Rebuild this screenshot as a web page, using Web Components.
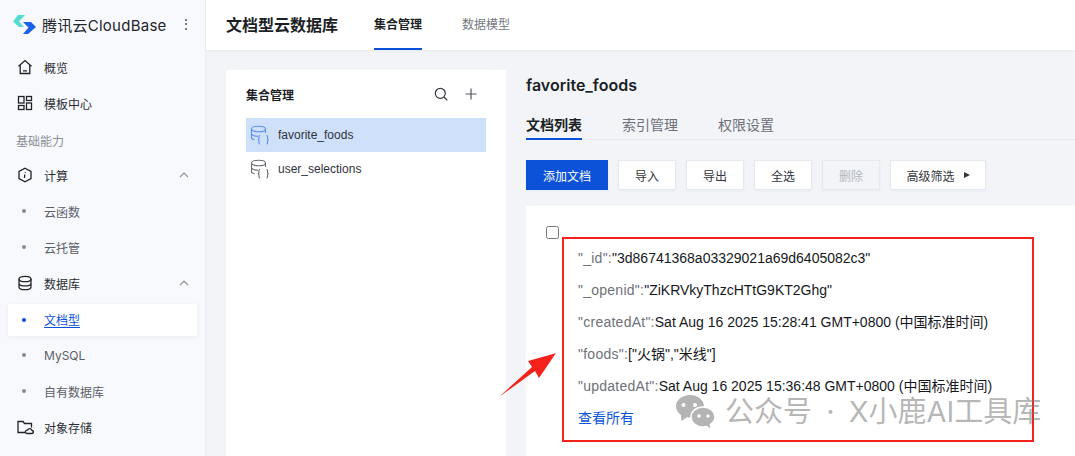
<!DOCTYPE html>
<html lang="zh-CN">
<head>
<meta charset="utf-8">
<title>CloudBase</title>
<style>
  html, body { margin: 0; height: 456px; overflow: hidden; }
  body { font-family: Inter, "Noto Sans CJK SC", sans-serif; color: #1c1f26; }
</style>
</head>
<body>
<cloud-app>
  <side-bar slot="side">
    <nav-row icon="home">概览</nav-row>
    <nav-row icon="grid">模板中心</nav-row>
    <nav-label>基础能力</nav-label>
    <nav-row icon="hex" open>计算</nav-row>
    <nav-row sub>云函数</nav-row>
    <nav-row sub>云托管</nav-row>
    <nav-row icon="db" open>数据库</nav-row>
    <nav-row sub active>文档型</nav-row>
    <nav-row sub>MySQL</nav-row>
    <nav-row sub>自有数据库</nav-row>
    <nav-row icon="folder">对象存储</nav-row>
  </side-bar>
  <top-bar slot="top"></top-bar>
  <collection-panel slot="left">
    <collection-row selected>favorite_foods</collection-row>
    <collection-row>user_selections</collection-row>
  </collection-panel>
  <doc-view slot="right">
    <doc-field name="_id">"3d86741368a03329021a69d6405082c3"</doc-field>
    <doc-field name="_openid">"ZiKRVkyThzcHTtG9KT2Ghg"</doc-field>
    <doc-field name="createdAt">Sat Aug 16 2025 15:28:41 GMT+0800 (中国标准时间)</doc-field>
    <doc-field name="foods">["火锅","米线"]</doc-field>
    <doc-field name="updatedAt">Sat Aug 16 2025 15:36:48 GMT+0800 (中国标准时间)</doc-field>
  </doc-view>
  <note-layer slot="over"></note-layer>
</cloud-app>

<script>
const ICONS = {
  home: '<path d="M2.5 8.2 9 2.5l6.5 5.7M4.2 7v8.5h9.6V7M7 12.8h4"/>',
  grid: '<rect x="2.5" y="2.5" width="5.5" height="6.5"/><rect x="10.5" y="2.5" width="5" height="4"/><rect x="2.5" y="11.5" width="5.5" height="4"/><rect x="10.5" y="9" width="5" height="6.5"/>',
  hex: '<path d="M9 2.2 15 5.5v7L9 15.8 3 12.5v-7z"/><path d="M9.3 6v.8M8.7 8.5 8.5 12"/>',
  db: '<ellipse cx="9" cy="5" rx="6" ry="2.7"/><path d="M3 5v8c0 1.5 2.7 2.7 6 2.7s6-1.2 6-2.7V5M3 9.2c0 1.5 2.7 2.7 6 2.7s6-1.2 6-2.7"/>',
  folder: '<path d="M9 14.5H2V3.5h5l1.5 2h7v4"/><path d="M10.5 15.5h5.2a1.5 1.5 0 0 0 .3-3 2.3 2.3 0 0 0-4.4-.4 1.8 1.8 0 0 0-1.1 3.4z"/>'
};

class CloudApp extends HTMLElement {
  constructor() {
    super();
    this.attachShadow({ mode: 'open' }).innerHTML = `
      <style>
        :host { display: block; position: relative; width: 1075px; height: 456px; overflow: hidden; background: #f2f4f8; }
        .shell { display: grid; grid-template-columns: 206px 1fr; height: 100%; }
        .main { display: flex; flex-direction: column; min-width: 0; }
        .body { display: flex; gap: 20px; padding: 20px 0 0 20px; flex: 1; min-height: 0; }
      </style>
      <div class="shell">
        <slot name="side"></slot>
        <div class="main">
          <slot name="top"></slot>
          <div class="body">
            <slot name="left"></slot>
            <slot name="right"></slot>
          </div>
        </div>
      </div>
      <slot name="over"></slot>
    `;
  }
}

class SideBar extends HTMLElement {
  constructor() {
    super();
    this.attachShadow({ mode: 'open' }).innerHTML = `
      <style>
        :host { display: block; background: #f8f9fc; border-right: 1px solid #eceef3; box-sizing: border-box; height: 456px; }
        .brand { display: flex; align-items: center; height: 48px; margin-bottom: 1px; padding-left: 13px; }
        .brand svg { width: 23px; height: 19px; }
        .brand span { font-size: 15px; margin-left: 6px; color: #22252b; white-space: nowrap; letter-spacing: .25px; }
        .more { margin-left: 18px; display: flex; flex-direction: column; gap: 2.5px; }
        .more i { width: 2px; height: 2px; border-radius: 50%; background: #555; }
      </style>
      <div class="brand">
        <svg viewBox="0 0 23 19">
          <path d="M5 0h7L6 6.5 11 12H6L0 6.5z" fill="#55dcd2"/>
          <path d="M10 7h8l5 5-8 7h-5l5.5-6.5z" fill="#1b62ea"/>
        </svg>
        <span>腾讯云CloudBase</span>
        <div class="more"><i></i><i></i><i></i></div>
      </div>
      <slot></slot>
    `;
  }
}

class NavLabel extends HTMLElement {
  constructor() {
    super();
    this.attachShadow({ mode: 'open' }).innerHTML = `
      <style>
        :host { display: block; height: 36px; box-sizing: border-box; padding: 6px 0 0 16px; line-height: 30px; font-size: 12px; color: #8b8f99; }
      </style>
      <slot></slot>
    `;
  }
}

class NavRow extends HTMLElement {
  constructor() {
    super();
    const icon = this.getAttribute('icon');
    const lead = icon
      ? `<svg class="ico" viewBox="0 0 18 18">${ICONS[icon]}</svg>`
      : '<i class="dot"></i>';
    const chev = this.hasAttribute('open')
      ? '<svg class="chev" viewBox="0 0 10 6"><path d="M1 5 5 1l4 4"/></svg>'
      : '';
    this.attachShadow({ mode: 'open' }).innerHTML = `
      <style>
        :host { display: block; height: 36px; padding: 2px 8px; box-sizing: border-box; font-size: 12px; color: #2b2e35; }
        :host([sub]) { color: #5c606a; }
        :host([active]) { color: #0b52d8; padding: 3px 8px 1px; }
        .row { display: flex; align-items: center; height: 32px; padding-left: 8px; }
        :host([active]) .row { background: #fff; box-shadow: 0 1px 4px rgba(30, 50, 90, .07); }
        :host([active]) .txt { text-decoration: underline; text-underline-offset: 2px; margin-bottom: 2px; }
        .ico { width: 18px; height: 18px; fill: none; stroke: #20232a; stroke-width: 1.3; margin-right: 10px; flex: none; }
        .dot { width: 4px; height: 4px; border-radius: 50%; background: #8a8d95; margin: 0 18px 0 6px; flex: none; }
        :host([active]) .dot { background: #0b52d8; }
        .txt { flex: 1; white-space: nowrap; }
        .chev { width: 10px; height: 6px; fill: none; stroke: #8d9097; stroke-width: 1.1; margin-right: 8.5px; }
      </style>
      <div class="row">${lead}<span class="txt"><slot></slot></span>${chev}</div>
    `;
  }
}

class TopBar extends HTMLElement {
  constructor() {
    super();
    this.attachShadow({ mode: 'open' }).innerHTML = `
      <style>
        :host { display: flex; align-items: stretch; height: 50px; background: #fff; padding-left: 20px; box-sizing: border-box; box-shadow: 0 1px 3px rgba(40, 60, 100, .05); }
        h1 { margin: 0 36px 0 0; font-size: 16px; line-height: 50px; font-weight: 600; color: #1c1f26; white-space: nowrap; }
        a { font-size: 12px; line-height: 50px; height: 50px; box-sizing: border-box; margin-right: 40px; color: #75787f; white-space: nowrap; }
        a.on { color: #1c1f26; font-weight: 600; border-bottom: 2px solid #0b52d8; }
      </style>
      <h1>文档型云数据库</h1>
      <a class="on">集合管理</a>
      <a>数据模型</a>
    `;
  }
}

class CollectionPanel extends HTMLElement {
  constructor() {
    super();
    this.attachShadow({ mode: 'open' }).innerHTML = `
      <style>
        :host { display: block; width: 280px; background: #fff; padding: 0 20px; box-sizing: border-box; height: 386px; }
        .head { display: flex; align-items: center; height: 48px; font-size: 12px; font-weight: 600; color: #1c1f26; }
        .head span { flex: 1; }
        svg { fill: none; stroke: #33363d; stroke-width: 1.2; width: 16px; height: 16px; }
        .add { margin-left: 14px; margin-right: 7px; stroke: #55585f; }
      </style>
      <div class="head">
        <span>集合管理</span>
        <svg viewBox="0 0 16 16"><circle cx="7.3" cy="7.3" r="5"/><path d="m11 11 3.3 3.3"/></svg>
        <svg class="add" viewBox="0 0 16 16"><path d="M8 2.5v11M2.5 8h11"/></svg>
      </div>
      <slot></slot>
    `;
  }
}

class CollectionRow extends HTMLElement {
  constructor() {
    super();
    this.attachShadow({ mode: 'open' }).innerHTML = `
      <style>
        :host { display: flex; align-items: center; height: 34px; padding-left: 4px; font-family: "Liberation Sans", sans-serif; font-size: 12px; color: #30333a; box-sizing: border-box; }
        :host([selected]) { background: #cfe0fa; }
        svg { width: 20px; height: 20px; margin-right: 8px; fill: none; stroke: #6a6d74; stroke-width: 1.1; flex: none; }
        :host([selected]) svg { stroke: #5a90ee; }
      </style>
      <svg viewBox="0 0 20 20">
        <ellipse cx="8.5" cy="4" rx="7" ry="2.8"/>
        <path d="M1.5 4v8.500c0 1 1.200 1.800 3 2.300M15.500 4v4M1.500 8.500c0 1.500 3 2.800 6.500 2.800"/>
        <path d="M10 10.500c-1.500 0-1 1.500-1 2.800s-1.200 1.400-1.200 1.400 1.200.1 1.200 1.400-.5 2.900 1 2.900M16.500 10.500c1.500 0 1 1.500 1 2.800s1.200 1.400 1.200 1.400-1.200.1-1.200 1.400.5 2.900-1 2.900"/>
      </svg>
      <slot></slot>
    `;
  }
}

class DocView extends HTMLElement {
  constructor() {
    super();
    this.attachShadow({ mode: 'open' }).innerHTML = `
      <style>
        :host { display: block; flex: 1; min-width: 549px; }
        h2 { margin: 0; height: 30px; line-height: 30px; font-size: 16px; font-weight: 600; color: #1c1f26; }
        .tabs { display: flex; gap: 40px; margin-top: 10px; height: 29px; border-bottom: 1px solid #e3e6ee; }
        .tabs a { font-size: 14px; line-height: 30px; height: 30px; box-sizing: border-box; color: #6d7078; white-space: nowrap; }
        .tabs a.on { color: #1c1f26; font-weight: 600; border-bottom: 2px solid #0b52d8; }
        .tools { display: flex; gap: 10px; margin-top: 20px; }
        button { display: flex; align-items: center; justify-content: center; height: 30px; width: 58px; padding: 0; background: #fff; border: 1px solid #e6e9f0; font: inherit; font-size: 12px; color: #33363d; box-sizing: border-box; box-shadow: 0 1px 2px rgba(40, 60, 100, .05); white-space: nowrap; }
        button.main { width: 82px; background: #0b52d8; border-color: #0b52d8; color: #fff; }
        button.off { background: #f2f4f8; color: #b4b7bf; }
        button.filter { width: 96px; }
        button.filter i { border-left: 6px solid #33363d; border-top: 3.5px solid transparent; border-bottom: 3.5px solid transparent; margin-left: 9px; }
        .card { margin-top: 16px; background: #fff; height: 250px; padding: 20px 0 0 20px; box-sizing: border-box; }
        .check { width: 13px; height: 13px; border: 1px solid #767676; border-radius: 2.5px; box-sizing: border-box; background: #fff; }
        .fields { margin: 3px 0 0 32px; }
        .more { font-size: 14px; line-height: 32px; color: #0b52d8; }
      </style>
      <h2>favorite_foods</h2>
      <div class="tabs"><a class="on">文档列表</a><a>索引管理</a><a>权限设置</a></div>
      <div class="tools">
        <button class="main">添加文档</button>
        <button>导入</button>
        <button>导出</button>
        <button>全选</button>
        <button class="off">删除</button>
        <button class="filter">高级筛选<i></i></button>
      </div>
      <div class="card">
        <div class="check"></div>
        <div class="fields">
          <slot></slot>
          <div class="more">查看所有</div>
        </div>
      </div>
    `;
  }
}

class DocField extends HTMLElement {
  constructor() {
    super();
    this.attachShadow({ mode: 'open' }).innerHTML = `
      <style>
        :host { display: block; height: 32px; line-height: 32px; font-family: "Liberation Sans", "Noto Sans CJK SC", sans-serif; font-size: 14px; color: #16181d; white-space: nowrap; }
        .key { color: #6e7178; letter-spacing: .25px; }
      </style>
      <span class="key">"${this.getAttribute('name')}":</span><slot></slot>
    `;
  }
}

class NoteLayer extends HTMLElement {
  constructor() {
    super();
    this.attachShadow({ mode: 'open' }).innerHTML = `
      <style>
        :host { position: absolute; inset: 0; display: block; pointer-events: none; }
        .box { position: absolute; left: 562px; top: 237px; width: 472px; height: 205px; box-sizing: border-box; border: 2px solid #f5211b; }
        .arrow { position: absolute; left: 0; top: 0; width: 1075px; height: 456px; }
        .mark { position: absolute; left: 725px; top: 393px; font-family: Inter, "Noto Sans CJK SC", sans-serif; font-size: 29px; line-height: 38px; word-spacing: 6px; color: rgba(120, 120, 120, .55); white-space: nowrap; }
        .wx { position: absolute; left: 675px; top: 395px; width: 41px; height: 36px; }
      </style>
      <div class="box"></div>
      <svg class="arrow" viewBox="0 0 1075 456">
        <path d="M499 397 532 367 528 361 553 354 556 353 539 378 535 371z" fill="#f5211b"/>
      </svg>
      <svg class="wx" viewBox="0 0 41 36">
        <path fill="#b4b4b4" d="M15 0C7.3 0 1 5 1 11.2c0 3.5 2 6.600 5 8.700L6.500 26l5.300-3.800c1 .2 2.100.3 3.200.3 7.700 0 14-5 14-11.300S22.700 0 15 0z"/>
        <path fill="#b4b4b4" stroke="#fff" stroke-width="1.5" d="M28 12c-6.800 0-12 4.500-12 10s5.200 10 12 10c1.300 0 2.500-.2 3.700-.5L36 35l-.6-5.700c2.900-1.800 4.600-4.400 4.600-7.300 0-5.500-5.200-10-12-10z"/>
        <circle cx="8.5" cy="10" r="2" fill="#fff"/><circle cx="20" cy="10" r="2" fill="#fff"/>
        <circle cx="24" cy="21" r="1.7" fill="#fff"/><circle cx="33" cy="21" r="1.7" fill="#fff"/>
      </svg>
      <div class="mark">公众号 · X小鹿AI工具库</div>
    `;
  }
}

customElements.define('cloud-app', CloudApp);
customElements.define('side-bar', SideBar);
customElements.define('nav-label', NavLabel);
customElements.define('nav-row', NavRow);
customElements.define('top-bar', TopBar);
customElements.define('collection-panel', CollectionPanel);
customElements.define('collection-row', CollectionRow);
customElements.define('doc-view', DocView);
customElements.define('doc-field', DocField);
customElements.define('note-layer', NoteLayer);
</script>
</body>
</html>
